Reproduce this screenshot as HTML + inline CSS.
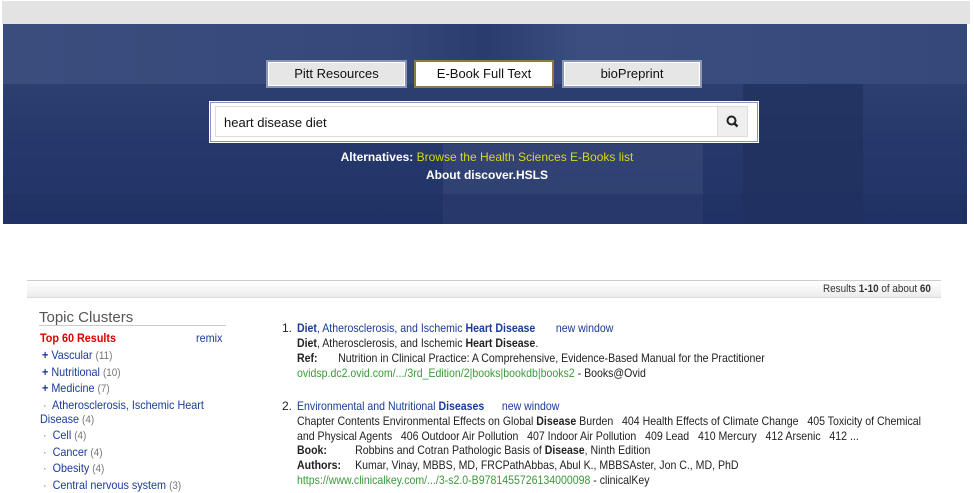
<!DOCTYPE html>
<html><head><meta charset="utf-8">
<style>
*{margin:0;padding:0;box-sizing:border-box}
body{width:974px;height:493px;background:#fff;font-family:"Liberation Sans",Arial,sans-serif;position:relative;overflow:hidden}
.top{position:absolute;left:2px;top:1px;width:968px;height:23px;background:#e3e3e3}
.ban{position:absolute;left:3px;top:24px;width:964px;height:200px;overflow:hidden;
background:linear-gradient(180deg,#34487a 0%,#2c3f70 30%,#25386b 60%,#213468 100%)}
.ban .s{position:absolute}
.btn{position:absolute;top:62px;height:24px;border:1px solid #fff;outline:2px solid #8a96b4;background:#e6e6e6;font-size:13px;text-align:center;line-height:22px;color:#111}
.sb{position:absolute;left:210px;top:102px;width:548px;height:40px;background:#fff;border:1px solid #8a96b4;outline:1px solid #fff}
.inp{position:absolute;left:215px;top:106px;width:503px;height:31px;border:1px solid #ddd;border-right:none;font-size:13px;line-height:31px;padding-left:8px;color:#111}
.go{position:absolute;left:717px;top:106px;width:31px;height:31px;background:#efefef;border:1px solid #ddd}
.alt{position:absolute;top:150px;width:974px;text-align:center;font-size:12px;color:#fff;font-weight:bold}
.rbar{position:absolute;left:27px;top:280px;width:914px;height:18px;border-top:1px solid #ccc;border-bottom:1px solid #ddd;background:linear-gradient(#fff,#ececec)}
.rbar span{position:absolute;right:10px;top:2px;font-size:11px;color:#333;transform:scaleX(.9);transform-origin:right}
.tc{position:absolute;left:39px;top:309px;width:187px;font-size:15px;color:#555;border-bottom:1px solid #ccc;height:17px;line-height:17px}
.l{position:absolute;font-size:12px;color:#1a3b99;left:40px;transform:scaleX(.9);transform-origin:left;white-space:nowrap}
.l i{font-style:normal;color:#777;font-size:11px}
.r{position:absolute;left:297px;font-size:12px;color:#222;white-space:nowrap;transform:scaleX(.88);transform-origin:left}
.bl{color:#1a3b99}
.gr{color:#3a9a3a}
.n{position:absolute;left:282px;font-size:12px;color:#222}
</style></head><body>
<div class="top"></div>
<div class="ban">
<div class="s" style="left:0;top:0;width:964px;height:60px;background:linear-gradient(90deg,#3a4e7e,#34487a 40%,#2a3c6e 50%,#3a4e80 60%,#34487a)"></div>
<div class="s" style="left:440px;top:120px;width:260px;height:80px;background:#3e4e7c;opacity:.5"></div>
<div class="s" style="left:740px;top:60px;width:120px;height:140px;background:#1f2e5a;opacity:.6"></div>
<div class="s" style="left:0;top:170px;width:964px;height:30px;background:#203061;opacity:.5"></div>
</div>
<div class="btn" style="left:268px;width:137px">Pitt Resources</div>
<div class="btn" style="left:416px;width:136px;background:#fff;outline-color:#8c7a45">E-Book Full Text</div>
<div class="btn" style="left:564px;width:136px">bioPreprint</div>
<div class="sb"></div>
<div class="inp">heart disease diet</div>
<div class="go"><svg width="29" height="29" viewBox="0 0 29 29"><circle cx="13.5" cy="13.5" r="4" fill="none" stroke="#222" stroke-width="2"/><line x1="16.5" y1="16.5" x2="19.5" y2="19.5" stroke="#222" stroke-width="2.4"/></svg></div>
<div class="alt">Alternatives: <span style="color:#d8d81a;font-weight:normal">Browse the Health Sciences E-Books list</span></div>
<div class="alt" style="top:168px">About discover.HSLS</div>

<div class="rbar"><span>Results <b>1-10</b> of about <b>60</b></span></div>
<div class="tc">Topic Clusters</div>
<div class="l" style="top:331px;color:#d00;font-weight:bold">Top 60 Results</div>
<div class="l" style="top:331px;left:196px">remix</div>
<div class="l" style="top:348px;left:42px"><b>+</b> Vascular <i>(11)</i></div>
<div class="l" style="top:365px;left:42px"><b>+</b> Nutritional <i>(10)</i></div>
<div class="l" style="top:381px;left:42px"><b>+</b> Medicine <i>(7)</i></div>
<div class="l" style="top:398px"><span style="color:#777">&nbsp;·</span>&nbsp; Atherosclerosis, Ischemic Heart</div>
<div class="l" style="top:412px">Disease <i>(4)</i></div>
<div class="l" style="top:428px"><span style="color:#777">&nbsp;·</span>&nbsp; Cell <i>(4)</i></div>
<div class="l" style="top:445px"><span style="color:#777">&nbsp;·</span>&nbsp; Cancer <i>(4)</i></div>
<div class="l" style="top:461px"><span style="color:#777">&nbsp;·</span>&nbsp; Obesity <i>(4)</i></div>
<div class="l" style="top:478px"><span style="color:#777">&nbsp;·</span>&nbsp; Central nervous system <i>(3)</i></div>

<div class="n" style="top:321px">1.</div>
<div class="r bl" style="top:321px"><b>Diet</b>, Atherosclerosis, and Ischemic <b>Heart Disease</b> &nbsp;&nbsp;&nbsp;&nbsp;&nbsp; new window</div>
<div class="r" style="top:336px"><b>Diet</b>, Atherosclerosis, and Ischemic <b>Heart Disease</b>.</div>
<div class="r" style="top:351px"><b>Ref:</b>&nbsp;&nbsp;&nbsp;&nbsp;&nbsp;&nbsp; Nutrition in Clinical Practice: A Comprehensive, Evidence-Based Manual for the Practitioner</div>
<div class="r" style="top:366px"><span class="gr">ovidsp.dc2.ovid.com/.../3rd_Edition/2|books|bookdb|books2</span> - Books@Ovid</div>
<div class="n" style="top:399px">2.</div>
<div class="r bl" style="top:399px">Environmental and Nutritional <b>Diseases</b> &nbsp;&nbsp;&nbsp;&nbsp; new window</div>
<div class="r" style="top:414px">Chapter Contents Environmental Effects on Global <b>Disease</b> Burden &nbsp; 404 Health Effects of Climate Change &nbsp; 405 Toxicity of Chemical</div>
<div class="r" style="top:429px">and Physical Agents &nbsp; 406 Outdoor Air Pollution &nbsp; 407 Indoor Air Pollution &nbsp; 409 Lead &nbsp; 410 Mercury &nbsp; 412 Arsenic &nbsp; 412 ...</div>
<div class="r" style="top:443px"><b>Book:</b><span style="position:absolute;left:66px">Robbins and Cotran Pathologic Basis of <b>Disease</b>, Ninth Edition</span></div>
<div class="r" style="top:458px"><b>Authors:</b><span style="position:absolute;left:66px">Kumar, Vinay, MBBS, MD, FRCPathAbbas, Abul K., MBBSAster, Jon C., MD, PhD</span></div>
<div class="r" style="top:473px"><span class="gr">https://www.clinicalkey.com/.../3-s2.0-B9781455726134000098</span> - clinicalKey</div>
</body></html>
